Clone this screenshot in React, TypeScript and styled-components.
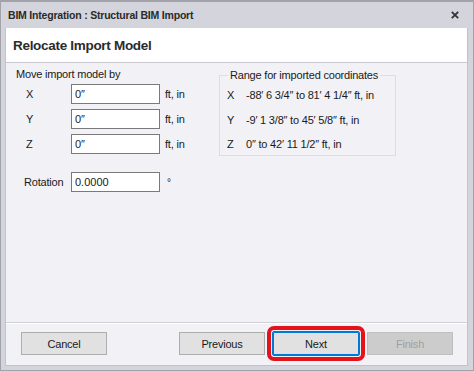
import React from "react";
import styled, { createGlobalStyle } from "styled-components";

const GlobalStyle = createGlobalStyle`
  html, body {
    margin: 0;
    padding: 0;
    width: 474px;
    height: 371px;
    overflow: hidden;
  }
  body {
    font-family: "Liberation Sans", Arial, sans-serif;
    font-size: 11px;
    color: #1a1a1a;
  }
`;

const Window = styled.div`
  box-sizing: border-box;
  width: 474px;
  height: 371px;
  display: flex;
  flex-direction: column;
  background: #d3d4dc;
  border: 1px solid #a2a2aa;
  border-top-width: 2px;
`;

const TitleBar = styled.div`
  height: 26px;
  flex: none;
  display: flex;
  align-items: center;
  justify-content: space-between;
  padding: 0 14px 0 7px;
`;

const TitleText = styled.span`
  font-weight: bold;
  font-size: 10.5px;
  letter-spacing: -0.2px;
  color: #2a2a2a;
`;

const CloseIcon = styled.svg`
  width: 8px;
  height: 8px;
  display: block;
`;

const Inner = styled.div`
  flex: 1;
  display: flex;
  flex-direction: column;
  margin: 0 5px 4px 4px;
  border-left: 1px solid #c2c2ca;
  border-right: 1px solid #c2c2ca;
  border-bottom: 1px solid #c2c2ca;
  background: #f1f1f6;
`;

const Header = styled.div`
  height: 34px;
  flex: none;
  display: flex;
  align-items: center;
  padding-left: 7px;
  background: #ffffff;
  border-bottom: 1px solid #c9c9cf;
  font-weight: bold;
  font-size: 13.5px;
  letter-spacing: -0.3px;
  color: #2b2b2b;
`;

const Body = styled.div`
  flex: 1;
  display: flex;
  align-items: flex-start;
  padding: 4px 0 0 10px;
`;

const MoveSection = styled.div`
  width: 203px;
  flex: none;
`;

const SectionTitle = styled.div`
  height: 14px;
  line-height: 14px;
  letter-spacing: -0.2px;
`;

const FieldGrid = styled.div`
  display: grid;
  grid-template-columns: 45px 89px auto;
  row-gap: 5px;
  align-items: center;
  padding-left: 10px;
  margin-top: 3px;
`;

const RotationGrid = styled(FieldGrid)`
  grid-template-columns: 47px 89px auto;
  padding-left: 8px;
  margin-top: 18px;
`;

const Label = styled.span`
  letter-spacing: -0.2px;
`;

const Field = styled.input`
  box-sizing: border-box;
  width: 89px;
  height: 20px;
  margin: 0;
  padding: 0 3px;
  border: 1px solid #7a7a7a;
  background: #ffffff;
  font-family: "Liberation Sans", Arial, sans-serif;
  font-size: 11px;
  color: #1a1a1a;
  outline: none;
`;

const Unit = styled.span`
  padding-left: 5px;
  letter-spacing: -0.2px;
`;

const Degree = styled(Unit)`
  padding-left: 7px;
  font-size: 10px;
`;

const RangeBox = styled.fieldset`
  box-sizing: border-box;
  width: 177px;
  height: 87px;
  margin: 2px 0 0 0;
  padding: 2px 0 0 7px;
  border: 1px solid #dcdce2;
`;

const RangeLegend = styled.legend`
  padding: 0 2px;
  margin-left: 1px;
  letter-spacing: -0.2px;
`;

const RangeRow = styled.div`
  display: flex;
  height: 24.5px;
  align-items: center;
  letter-spacing: -0.2px;
`;

const Axis = styled.span`
  width: 19px;
  flex: none;
`;

const Footer = styled.div`
  height: 43px;
  flex: none;
  box-sizing: border-box;
  display: flex;
  align-items: flex-start;
  gap: 7px;
  padding: 9px 14px 0 15px;
  border-top: 1px solid #cfcfd6;
  box-shadow: inset 0 1px 0 #ffffff;
`;

const Button = styled.button<{ $focused?: boolean; $wide?: boolean }>`
  box-sizing: border-box;
  width: ${(p) => (p.$wide ? 88 : 86)}px;
  height: ${(p) => (p.$focused ? 25 : 23)}px;
  margin-top: ${(p) => (p.$focused ? -1 : 0)}px;
  padding: 0;
  background: #e1e1e1;
  border: 1px solid ${(p) => (p.$focused ? "#0078d7" : "#adadad")};
  box-shadow: ${(p) => (p.$focused ? "inset 0 0 0 1px #0078d7" : "none")};
  font-family: "Liberation Sans", Arial, sans-serif;
  font-size: 11px;
  letter-spacing: -0.2px;
  color: #1a1a1a;
  outline: ${(p) => (p.$focused ? "4px solid #e3121b" : "none")};
  outline-offset: 1px;
  border-radius: ${(p) => (p.$focused ? "2px" : "0")};
  &:disabled {
    background: #cccccc;
    border-color: #bfbfbf;
    color: #a0a0a0;
  }
`;

const Spacer = styled.div`
  flex: 1;
`;

const moveRows = ["X", "Y", "Z"];

const ranges = [
  ["X", "-88\u2032 6 3/4\u2033 to 81\u2032 4 1/4\u2033 ft, in"],
  ["Y", "-9\u2032 1 3/8\u2033 to 45\u2032 5/8\u2033 ft, in"],
  ["Z", "0\u2033 to 42\u2032 11 1/2\u2033 ft, in"],
];

export default function App() {
  return (
    <>
      <GlobalStyle />
      <Window>
        <TitleBar>
          <TitleText>BIM Integration : Structural BIM Import</TitleText>
          <CloseIcon viewBox="0 0 8 8">
            <path d="M0.8 0.8 L7.2 7.2 M7.2 0.8 L0.8 7.2" stroke="#333" strokeWidth="1.8" />
          </CloseIcon>
        </TitleBar>
        <Inner>
          <Header>Relocate Import Model</Header>
          <Body>
            <MoveSection>
              <SectionTitle>Move import model by</SectionTitle>
              <FieldGrid>
                {moveRows.map((axis) => (
                  <React.Fragment key={axis}>
                    <Label>{axis}</Label>
                    <Field defaultValue={"0\u2033"} />
                    <Unit>ft, in</Unit>
                  </React.Fragment>
                ))}
              </FieldGrid>
              <RotationGrid>
                <Label>Rotation</Label>
                <Field defaultValue="0.0000" />
                <Degree>°</Degree>
              </RotationGrid>
            </MoveSection>
            <RangeBox>
              <RangeLegend>Range for imported coordinates</RangeLegend>
              {ranges.map(([axis, text]) => (
                <RangeRow key={axis}>
                  <Axis>{axis}</Axis>
                  <span>{text}</span>
                </RangeRow>
              ))}
            </RangeBox>
          </Body>
          <Footer>
            <Button>Cancel</Button>
            <Spacer />
            <Button>Previous</Button>
            <Button $focused $wide>
              Next
            </Button>
            <Button disabled>Finish</Button>
          </Footer>
        </Inner>
      </Window>
    </>
  );
}
